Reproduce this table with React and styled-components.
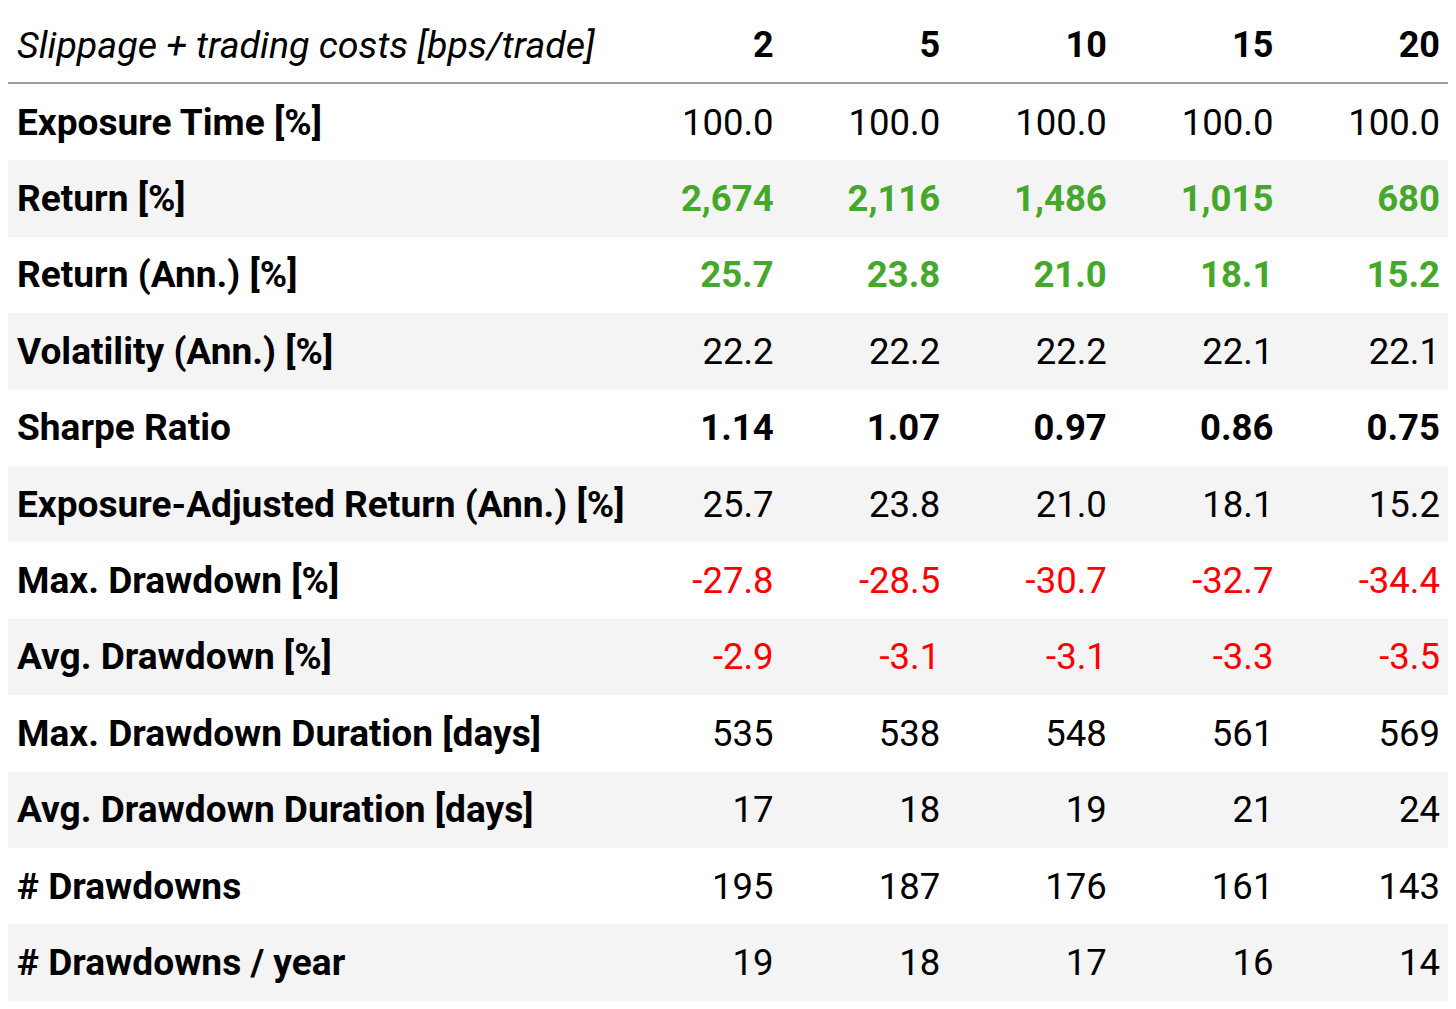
import React from "react";
import styled, { createGlobalStyle } from "styled-components";

const Global = createGlobalStyle`
  html, body { background: #ffffff; }
  body {
    margin: 8px;
    font-family: Roboto, "Liberation Sans", sans-serif;
    color: #000;
  }
`;

const Table = styled.div`
  display: grid;
  grid-template-columns: minmax(0, 1fr) repeat(5, 166.6px);
  width: 100%;
`;

const HeadCell = styled.div`
  height: 74px;
  display: flex;
  align-items: center;
  justify-content: ${(p) => (p.$num ? "flex-end" : "flex-start")};
  padding: 0 ${(p) => (p.$num ? "8px" : "0")} 0 ${(p) => (p.$num ? "0" : "9px")};
  font-size: ${(p) => (p.$num ? "36px" : "37.6px")};
  font-style: ${(p) => (p.$num ? "normal" : "italic")};
  font-weight: ${(p) => (p.$num ? 700 : 400)};
  border-bottom: 2px solid #9e9e9e;
  white-space: nowrap;
`;

const Cell = styled.div`
  height: 76.4px;
  display: flex;
  align-items: center;
  justify-content: ${(p) => (p.$num ? "flex-end" : "flex-start")};
  padding: 0 ${(p) => (p.$num ? "8px" : "0")} 0 ${(p) => (p.$num ? "0" : "9px")};
  background: ${(p) => (p.$stripe ? "#f4f4f4" : "#ffffff")};
  font-size: ${(p) => (p.$num ? "36.5px" : "37.1px")};
  font-weight: ${(p) => (p.$bold ? 700 : 400)};
  color: ${(p) =>
    p.$tone === "green" ? "#45a82b" : p.$tone === "red" ? "#ff0000" : "#000"};
  white-space: nowrap;
  overflow: visible;
  position: relative;
  z-index: ${(p) => (p.$num ? 0 : 1)};
`;

const cols = ["2", "5", "10", "15", "20"];

const rows = [
  { label: "Exposure Time [%]", values: ["100.0", "100.0", "100.0", "100.0", "100.0"] },
  { label: "Return [%]", values: ["2,674", "2,116", "1,486", "1,015", "680"], tone: "green", bold: true },
  { label: "Return (Ann.) [%]", values: ["25.7", "23.8", "21.0", "18.1", "15.2"], tone: "green", bold: true },
  { label: "Volatility (Ann.) [%]", values: ["22.2", "22.2", "22.2", "22.1", "22.1"] },
  { label: "Sharpe Ratio", values: ["1.14", "1.07", "0.97", "0.86", "0.75"], bold: true },
  { label: "Exposure-Adjusted Return (Ann.) [%]", values: ["25.7", "23.8", "21.0", "18.1", "15.2"] },
  { label: "Max. Drawdown [%]", values: ["-27.8", "-28.5", "-30.7", "-32.7", "-34.4"], tone: "red" },
  { label: "Avg. Drawdown [%]", values: ["-2.9", "-3.1", "-3.1", "-3.3", "-3.5"], tone: "red" },
  { label: "Max. Drawdown Duration [days]", values: ["535", "538", "548", "561", "569"] },
  { label: "Avg. Drawdown Duration [days]", values: ["17", "18", "19", "21", "24"] },
  { label: "# Drawdowns", values: ["195", "187", "176", "161", "143"] },
  { label: "# Drawdowns / year", values: ["19", "18", "17", "16", "14"] },
];

export default function App() {
  return (
    <>
      <Global />
      <Table>
        <HeadCell>Slippage + trading costs [bps/trade]</HeadCell>
        {cols.map((c) => (
          <HeadCell key={c} $num>
            {c}
          </HeadCell>
        ))}
        {rows.map((r, i) => (
          <React.Fragment key={r.label}>
            <Cell $stripe={i % 2 === 1} $bold>
              {r.label}
            </Cell>
            {r.values.map((v, j) => (
              <Cell key={j} $num $stripe={i % 2 === 1} $bold={r.bold} $tone={r.tone}>
                {v}
              </Cell>
            ))}
          </React.Fragment>
        ))}
      </Table>
    </>
  );
}
